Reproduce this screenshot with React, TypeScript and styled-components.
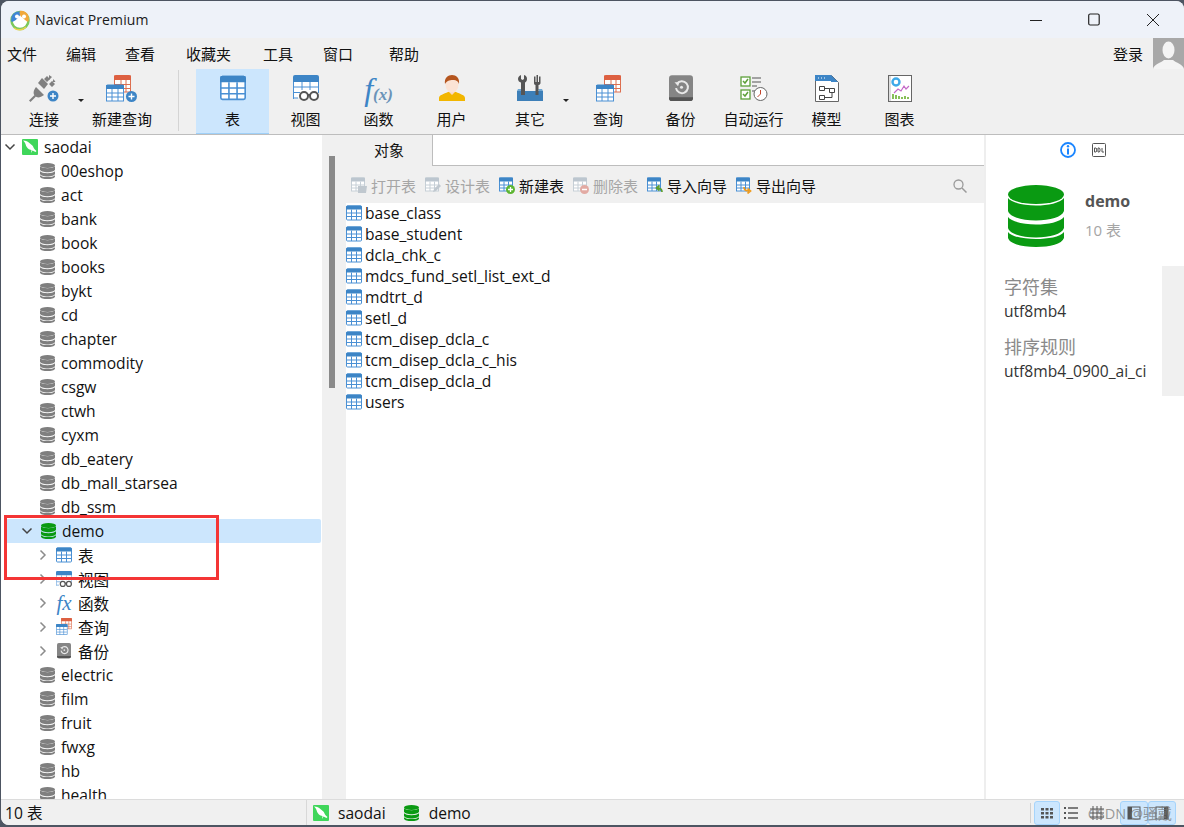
import React from "react";
import styled, { createGlobalStyle } from "styled-components";

const Global = createGlobalStyle`
  html, body { margin: 0; padding: 0; height: 100%; background: #4d5562; overflow: hidden; }
  #root { height: 100%; }
  * { box-sizing: border-box; }
`;

const FONT = `"Open Sans", "Noto Sans", "Noto Sans CJK SC", sans-serif`;

const Screen = styled.div`
  position: relative;
  width: 1184px;
  height: 827px;
  padding: 1px 0 2px 1px;
  font-family: ${FONT};
  color: #111;
`;
const Win = styled.div`
  height: 100%;
  display: flex;
  flex-direction: column;
  border-radius: 8px 8px 0 8px;
  overflow: hidden;
  background: #f0f0f0;
`;
const TitleBar = styled.div`
  height: 37px;
  flex: none;
  display: flex;
  align-items: center;
  padding-left: 8px;
  background: #eef2f9;
`;
const TitleText = styled.span`
  margin-left: 4px;
  font-size: 14px;
  color: #1a1a1a;
  letter-spacing: 0.1px;
`;
const WinButtons = styled.div`
  margin-left: auto;
  padding-right: 2px;
  display: flex;
  align-items: center;
`;
const WinButton = styled.div`
  width: 58.500px;
  height: 37px;
  display: flex;
  align-items: center;
  justify-content: center;
`;
const MenuBar = styled.div`
  height: 30px;
  flex: none;
  display: flex;
  align-items: center;
  padding-left: 6px;
  font-size: 15px;
`;
const MenuItem = styled.div<{ $w: number }>`
  width: ${(p) => p.$w}px;
  white-space: nowrap;
`;
const Login = styled.div`
  margin-left: auto;
  display: flex;
  align-items: center;
  height: 30px;
  gap: 10px;
`;
const Avatar = styled.div`
  width: 31px;
  height: 31px;
  background: #a8a8a8;
  overflow: hidden;
`;
const Toolbar = styled.div`
  height: 67px;
  flex: none;
  display: flex;
  padding: 1px 0 0 7px;
  border-bottom: 1px solid #bdbdbd;
`;
const ToolButton = styled.div<{ $w?: number; $active?: boolean }>`
  position: relative;
  width: ${(p) => p.$w ?? 73}px;
  height: 65px;
  flex: none;
  display: flex;
  flex-direction: column;
  align-items: center;
  background: ${(p) => (p.$active ? "#cce6fd" : "transparent")};
  border-bottom: ${(p) => (p.$active ? "1px solid #9fd0f8" : "none")};
`;
const ToolIcon = styled.div`
  height: 40px;
  padding-top: 6px;
  display: flex;
  align-items: flex-start;
  justify-content: center;
`;
const ToolLabel = styled.div`
  font-size: 15px;
  line-height: 20px;
  white-space: nowrap;
`;
const Caret = styled.div<{ $right: number }>`
  position: absolute;
  right: ${(p) => p.$right}px;
  top: 30px;
  width: 0;
  height: 0;
  border-left: 3px solid transparent;
  border-right: 3px solid transparent;
  border-top: 3px solid #222;
`;
const ToolSep = styled.div`
  width: 1px;
  height: 61px;
  margin: 1px 17px 0 20px;
  background: #d4d4d4;
  flex: none;
`;
const FxBig = styled.div`
  font-family: "Liberation Serif", serif;
  font-style: italic;
  color: #3d85c6;
  font-size: 32px;
  line-height: 28px;
  white-space: nowrap;
`;
const FxParen = styled.span`
  font-size: 17px;
  font-weight: 700;
  color: #6a93b8;
`;
const FxSmall = styled.div`
  font-family: "Liberation Serif", serif;
  font-style: italic;
  color: #3d85c6;
  font-size: 21px;
  line-height: 18px;
  white-space: nowrap;
`;
const Main = styled.div`
  flex: 1;
  min-height: 0;
  display: flex;
  background: #fff;
`;
const Tree = styled.div`
  width: 321px;
  flex: none;
  overflow: hidden;
  background: #fff;
`;
const Row = styled.div<{ $indent: number; $selected?: boolean }>`
  height: 24px;
  display: flex;
  align-items: center;
  padding-left: ${(p) => p.$indent}px;
  margin: ${(p) => (p.$selected ? "0 1px 0 5px" : "0")};
  background: ${(p) => (p.$selected ? "#cce6fd" : "transparent")};
  border-radius: 2px;
  font-size: 15.6px;
  white-space: nowrap;
`;
const Chevron = styled.div`
  width: 16px;
  height: 16px;
  flex: none;
  display: flex;
  align-items: center;
  justify-content: center;
`;
const RowIcon = styled.div<{ $w: number; $mr: number; $ml?: number }>`
  width: ${(p) => p.$w}px;
  margin-left: ${(p) => p.$ml ?? 0}px;
  margin-right: ${(p) => p.$mr}px;
  flex: none;
  display: flex;
  align-items: center;
  justify-content: center;
`;
const Center = styled.div`
  width: 662px;
  flex: none;
  display: flex;
  background: #fff;
`;
const Gutter = styled.div`
  width: 24px;
  flex: none;
  background: #f0f0f0;
  padding: 21px 0 0 7px;
`;
const Thumb = styled.div`
  position: relative;
  z-index: 2;
  width: 6px;
  height: 232px;
  background: #8a8a8a;
`;
const ObjectPane = styled.div`
  flex: 1;
  min-width: 0;
  display: flex;
  flex-direction: column;
`;
const TabStrip = styled.div`
  height: 31px;
  flex: none;
  display: flex;
  margin-left: -24px;
  position: relative;
`;
const Tab = styled.div`
  width: 111px;
  height: 31px;
  flex: none;
  background: #f0f0f0;
  border-right: 1px solid #bdbdbd;
  display: flex;
  align-items: center;
  padding: 0 0 2px 52px;
  font-size: 15px;
`;
const TabRest = styled.div`
  flex: 1;
  border-bottom: 1px solid #bdbdbd;
`;
const ObjBar = styled.div`
  height: 37px;
  flex: none;
  display: flex;
  align-items: center;
  gap: 9px;
  padding: 2px 8px 0 5px;
  background: #f0f0f0;
`;
const ObjButton = styled.div<{ $off?: boolean }>`
  display: flex;
  align-items: center;
  gap: 4px;
  font-size: 15px;
  white-space: nowrap;
  color: ${(p) => (p.$off ? "#a6a6a6" : "#111")};
`;
const SearchSlot = styled.div`
  margin-left: auto;
  display: flex;
  margin-right: 9px;
`;
const ObjList = styled.div`
  flex: 1;
  background: #fff;
`;
const ObjRow = styled.div`
  height: 21px;
  display: flex;
  align-items: center;
  gap: 3px;
  padding-bottom: 2px;
  font-size: 15.6px;
  white-space: nowrap;
`;
const PaneDivider = styled.div`
  width: 2px;
  flex: none;
  background: #eeeeee;
`;
const Info = styled.div`
  flex: 1;
  position: relative;
  background: #fff;
  padding-left: 18px;
`;
const InfoTabs = styled.div`
  height: 30px;
  display: flex;
  align-items: center;
  justify-content: flex-start;
  padding-left: 56px;
  gap: 16px;
`;
const InfoHead = styled.div`
  display: flex;
  margin: 20px 0 0 4px;
  height: 90px;
`;
const InfoHeadText = styled.div`
  margin-left: 21px;
  padding-top: 4px;
`;
const InfoName = styled.div`
  font-size: 16px;
  font-weight: 700;
  color: #555;
  line-height: 24px;
`;
const InfoCount = styled.div`
  font-size: 15px;
  color: #a5a5a5;
  line-height: 20px;
  margin-top: 7px;
`;
const InfoLabel = styled.div`
  font-size: 18px;
  color: #8a8a8a;
  line-height: 24px;
`;
const InfoValue = styled.div`
  font-size: 15.6px;
  color: #333;
  line-height: 20px;
  margin: 2px 0 14px;
  white-space: nowrap;
`;
const InfoScroll = styled.div`
  position: absolute;
  right: 0;
  top: 131px;
  width: 22px;
  height: 130px;
  background: #f0f0f0;
`;
const StatusBar = styled.div`
  height: 26px;
  flex: none;
  display: flex;
  align-items: center;
  border-top: 1px solid #dcdcdc;
  background: #f0f0f0;
  font-size: 15.6px;
`;
const StatusLeft = styled.div`
  width: 306px;
  padding-left: 4px;
  height: 100%;
  display: flex;
  align-items: center;
  border-right: 1px solid #d8d8d8;
  flex: none;
`;
const StatusConn = styled.div`
  display: flex;
  align-items: center;
  gap: 9px;
  padding-left: 6px;
`;
const StatusRight = styled.div`
  margin-left: auto;
  margin-right: 8px;
  display: flex;
  align-items: center;
  height: 100%;
`;
const StatusSep = styled.div`
  width: 1px;
  height: 20px;
  background: #d0d0d0;
  margin-right: 3px;
`;
const StatusBtn = styled.div<{ $on?: boolean; $w: number; $mr?: number }>`
  width: ${(p) => p.$w}px;
  margin-right: ${(p) => p.$mr ?? 0}px;
  height: 24px;
  display: flex;
  align-items: center;
  justify-content: center;
  background: ${(p) => (p.$on ? "#cce6fd" : "transparent")};
  border: 1px solid ${(p) => (p.$on ? "#a6d4fb" : "transparent")};
  border-radius: 3px;
`;
const RedBox = styled.div`
  position: absolute;
  left: 4px;
  top: 515px;
  width: 215px;
  height: 65px;
  border: 3px solid #f43535;
  pointer-events: none;
`;
const Watermark = styled.div`
  position: absolute;
  right: 12px;
  bottom: 4px;
  font-size: 14.500px;
  color: rgba(120, 120, 120, 0.75);
  white-space: nowrap;
  pointer-events: none;
`;

const TableIcon = ({ s = 16, h = "#3d85c6", g = "#4a90d4" }: { s?: number; h?: string; g?: string }) => (
  <svg width={s} height={s} viewBox="0 0 16 16">
    <rect x="0.5" y="1" width="15" height="14" rx="1" fill="#fff" stroke={g} />
    <path d="M0 4.5V2a1.5 1.5 0 0 1 1.5-1.5h13A1.5 1.5 0 0 1 16 2v2.500z" fill={h} />
    <path d="M5.500 4.500V15M10.500 4.500V15M0.500 8h15M0.500 11.500h15" stroke={g} strokeWidth="1" fill="none" />
  </svg>
);
const ViewIcon = ({ s = 26 }: { s?: number }) => (
  <svg width={s} height={s} viewBox="0 0 26 26">
    <path d="M.5 24V4h25v14" fill="#fff" stroke="#4a90d4" />
    <path d="M0 7V2a2 2 0 0 1 2-2h22a2 2 0 0 1 2 2v5z" fill="#3d85c6" />
    <path d="M9 7v8M17 7v8M1 12h24M1 17.500h6M1 23h4" stroke="#4a90d4" fill="none" />
    <circle cx="11" cy="21" r="4" fill="#fff" stroke="#555" strokeWidth="2" />
    <circle cx="21" cy="21" r="4" fill="#fff" stroke="#555" strokeWidth="2" />
    <path d="M15 20h2" stroke="#555" strokeWidth="2" />
  </svg>
);
const UserIcon = () => (
  <svg width="26" height="27" viewBox="0 0 26 27">
    <path d="M0 26v-3c0-3 5-4 9-6h8c4 2 9 3 9 6v3z" fill="#f2b600" />
    <path d="M9 16l4 4 4-4v-4H9z" fill="#f9d9c6" />
    <ellipse cx="13" cy="9.500" rx="6.500" ry="8" fill="#fbe3d5" />
    <path d="M6 9C5 3 9 0 13 0s8 3 7 9c-1-3-3-4-5-4-3 0-7 0-9 4z" fill="#b5561f" />
  </svg>
);
const PlugIcon = () => (
  <svg width="32" height="28" viewBox="0 0 32 28">
    <g fill="#808080">
      <path d="M8 12l8 8c-4 3-7 3-9 1s-2-5 1-9z" />
      <path d="M6.500 20L1 25.500 2.500 27l5.500-5.500z" />
      <path d="M14 3l6 6-4 5-6-6z" />
      <path d="M19 1l3 3-3 3-3-3zM24 6l3 3-3 3-3-3z" />
      <path d="M21 0l3 2-3 3zM25.500 4l2 3-3 0z" />
    </g>
    <circle cx="25" cy="21" r="5.500" fill="#3d85c6" />
    <path d="M22 21h6M25 18v6" stroke="#fff" strokeWidth="1.400" />
  </svg>
);
const QueryIcon = ({ plus, w = 25 }: { plus?: boolean; w?: number }) => (
  <svg width={plus ? 32 : w} height={plus ? 27 : (w * 27) / 25} viewBox={plus ? "0 0 32 27" : "0 0 25 27"}>
    <rect x="8.500" y="1" width="16" height="16" fill="#fff" stroke="#dd6f50" />
    <path d="M8 5V2a2 2 0 0 1 2-2h13a2 2 0 0 1 2 2v3z" fill="#dd6041" />
    <path d="M15 5v12M20 5v12M9 9.500h15M9 13.500h15" stroke="#dd6f50" fill="none" />
    <rect x="0.500" y="10.500" width="17" height="15.500" fill="#fff" stroke="#4a90d4" />
    <path d="M0 14v-3a1.500 1.500 0 0 1 1.500-1.500h15A1.500 1.500 0 0 1 18 11v3z" fill="#3d85c6" />
    <path d="M6 14v12M12 14v12M1 18h16M1 22h16" stroke="#4a90d4" fill="none" />
    {plus && <circle cx="25.500" cy="21.500" r="5.500" fill="#3d85c6" />}
    {plus && <path d="M22.500 21.500h6M25.500 18.500v6" stroke="#fff" strokeWidth="1.400" />}
  </svg>
);
const OtherIcon = () => (
  <svg width="28" height="26" viewBox="0 0 28 26">
    <path d="M1 16h26v10H1z" fill="#3d7fb8" />
    <path d="M2 14h4l-1 2H1zM22 14h4l1 2h-4z" fill="#6fa7d3" />
    <g fill="#555">
      <path d="M5 0v4l1.500 1L8 4V0c2 .5 3 2 3 4s-1 3-2 3.500V20H5V7.500C3 7 2 5.500 2 4s1-3.500 3-4z" />
      <path d="M18 1.500h1.500V7h1V0H22v7h1V1.500h1.500V8c0 1-1 2-2 2v10H19.500V10c-1 0-1.500-1-1.500-2z" />
    </g>
  </svg>
);
const BackupIcon = ({ s = 24 }: { s?: number }) => (
  <svg width={s} height={s * 1.1} viewBox="0 0 24 26">
    <rect x="0" y="0" width="24" height="26" rx="3" fill="#858585" />
    <path d="M0 22h24v1a3 3 0 0 1-3 3H3a3 3 0 0 1-3-3z" fill="#555" />
    <path d="M8 8.500a6 6 0 1 1-1 4.500" fill="none" stroke="#e8e8e8" strokeWidth="2" />
    <path d="M5.500 7l5 0-1.500 4z" fill="#e8e8e8" />
    <circle cx="12.500" cy="12" r="1.500" fill="#e8e8e8" />
  </svg>
);
const AutoRunIcon = () => (
  <svg width="28" height="27" viewBox="0 0 28 27">
    <rect x="1" y="2" width="9" height="9" fill="#fff" stroke="#5da03a" strokeWidth="1.300" />
    <rect x="1" y="15" width="9" height="9" fill="#fff" stroke="#5da03a" strokeWidth="1.300" />
    <path d="M3 6l2 2 3-4M3 19l2 2 3-4" fill="none" stroke="#5da03a" strokeWidth="1.500" />
    <path d="M12 3h9M12 7h9M12 11h5M12 16h3" stroke="#888" strokeWidth="1.600" />
    <circle cx="20.500" cy="19" r="6.500" fill="#fff" stroke="#666" />
    <path d="M20.500 19v-4M20.500 19l-3 3" stroke="#c2452d" />
  </svg>
);
const ModelIcon = () => (
  <svg width="24" height="27" viewBox="0 0 24 27">
    <path d="M.5.500h16l7 7v19H.5z" fill="#fff" stroke="#666" />
    <path d="M0 0h16v6H0zM16 0l7 7h-7z" fill="#3d85c6" />
    <path d="M3 3h1M6 3h1M9 3h1" stroke="#fff" />
    <path d="M4.500 11.500h5v4h-5zM14.500 13.500h5v4h-5zM4.500 20.500h5v4h-5z" fill="none" stroke="#444" />
    <path d="M9.500 13.500h5M17 17.500v5h-7.500" fill="none" stroke="#444" />
  </svg>
);
const ChartIcon = () => (
  <svg width="24" height="27" viewBox="0 0 24 27">
    <rect x=".5" y=".5" width="23" height="26" fill="#fff" stroke="#666" />
    <path d="M2 1v25" stroke="#bbb" />
    <circle cx="8" cy="7" r="3.500" fill="none" stroke="#3ea9e8" strokeWidth="2.400" />
    <path d="M6 18l4-4 3 2 3-5 2 3 3-3" fill="none" stroke="#c46ac8" strokeWidth="1.200" />
    <path d="M5 19v5M8 20v4M11 21v3M14 22v2M17 21v3M20 22v2" stroke="#72b53a" strokeWidth="1.700" />
  </svg>
);
const DbIcon = ({ c = "#7f7f7f", w = 15, h = 16 }: { c?: string; w?: number; h?: number }) => (
  <svg width={w} height={h} viewBox="0 0 56 62" preserveAspectRatio="none">
    <ellipse cx="28" cy="9.500" rx="28" ry="9.500" fill={c} />
    <path d="M0 13c4 5 16 7.500 28 7.500S52 18 56 13v13c-2 6-14 9.500-28 9.500S2 32 0 26z" fill={c} />
    <path d="M0 32c4 5 16 7.500 28 7.500S52 37 56 32v11c-2 6-14 9.500-28 9.500S2 49 0 43z" fill={c} />
    <path d="M0 47c4 5 16 7 28 7s24-2 28-7v6c-2 6-14 9-28 9S2 59 0 53z" fill={c} />
  </svg>
);
const MysqlIcon = () => (
  <svg width="16" height="16" viewBox="0 0 16 16">
    <rect width="16" height="16" rx="1" fill="#3fd65a" />
    <path d="M1 1.500c3 0 5 1 7 3 1.500 1.500 3 2 3.500 4 .5 1.500 2 2.500 3 3.500l-1 1c-1-.5-2-1-3-1.500L9 14c0-1 .5-2 .5-3C7 11 4 8 3.500 5 3 3.500 2 2.500 1 1.500z" fill="#fff" />
  </svg>
);
const Logo = () => (
  <svg width="22" height="22" viewBox="0 0 22 22">
    <circle cx="11" cy="11.500" r="8.500" fill="#fff" stroke="#7cc95b" strokeWidth="2.500" />
    <path d="M2.500 13C1 7 5 1.500 11 2.500c2 1 1 3-1 5-2 2.500-4 5-7.500 5.500z" fill="#3f86d6" />
    <path d="M11 2c5-1 9 3 9 8 0 2-1 3-2 2.500-3-2-4-4-6-5-1-1-2-3-1-5.500z" fill="#f1a83a" />
    <circle cx="8" cy="7.500" r="2" fill="#fff" />
    <circle cx="15" cy="7.500" r="2" fill="#fff" />
    <path d="M5 19c4 3 9 2 12-1" fill="none" stroke="#e9d34c" strokeWidth="1.500" />
  </svg>
);
const ChevDown = ({ c = "#444" }: { c?: string }) => (
  <svg width="12" height="12" viewBox="0 0 12 12">
    <path d="M1.500 3.500L6 8l4.500-4.500" fill="none" stroke={c} strokeWidth="1.500" />
  </svg>
);
const ChevRight = () => (
  <svg width="12" height="12" viewBox="0 0 12 12">
    <path d="M3.500 1.500L8 6l-4.500 4.500" fill="none" stroke="#8c8c8c" strokeWidth="1.500" />
  </svg>
);
const ObjIcon = ({ kind, off }: { kind: string; off?: boolean }) => {
  const h = off ? "#bcc6cf" : "#3d85c6";
  const g = off ? "#c6cfd6" : "#4a90d4";
  return (
    <svg width="16" height="17" viewBox="0 0 16 17">
      <rect x=".5" y="1" width="13" height="13" fill="#fff" stroke={g} />
      <path d="M0 4.500V2a1.500 1.500 0 0 1 1.500-1.500h11A1.500 1.500 0 0 1 14 2v2.500z" fill={h} />
      <path d="M5 4.500V14M9.500 4.500V14M1 8h12M1 11h12" stroke={g} fill="none" />
      {kind === "open" && <path d="M7 9h9l-1 7H7z" fill="#c0c8cf" />}
      {kind === "design" && <path d="M8 15l1-3 5-5 2 2-5 5z" fill="#c0c8cf" />}
      {kind === "new" && <><circle cx="11.500" cy="12.500" r="4.500" fill="#5cb531" /><path d="M9 12.500h5M11.500 10v5" stroke="#fff" strokeWidth="1.300" /></>}
      {kind === "del" && <><circle cx="11.500" cy="12.500" r="4.500" fill="#e2aaa3" /><path d="M9 12.500h5" stroke="#fff" strokeWidth="1.300" /></>}
      {kind === "imp" && <path d="M15 15c0-3-1.500-4-4.500-4M12.500 8.500l-3 2.500 3 2.500" fill="none" stroke="#5c9e2e" strokeWidth="1.700" />}
      {kind === "exp" && <path d="M8 10c0 3 1.500 4 5 4M11.500 11.500l3 2.500-3 2.500" fill="none" stroke="#ef9b1d" strokeWidth="1.700" />}
    </svg>
  );
};

const dbsTop = ["00eshop", "act", "bank", "book", "books", "bykt", "cd", "chapter", "commodity", "csgw", "ctwh", "cyxm", "db_eatery", "db_mall_starsea", "db_ssm"];
const dbsBottom = ["electric", "film", "fruit", "fwxg", "hb", "health"];
const tables = ["base_class", "base_student", "dcla_chk_c", "mdcs_fund_setl_list_ext_d", "mdtrt_d", "setl_d", "tcm_disep_dcla_c", "tcm_disep_dcla_c_his", "tcm_disep_dcla_d", "users"];
const menus: [string, number][] = [["文件", 59], ["编辑", 59], ["查看", 61], ["收藏夹", 77], ["工具", 60], ["窗口", 66], ["帮助", 30]];

const DbRow = ({ name }: { name: string }) => (
  <Row $indent={38}>
    <RowIcon $w={16} $mr={6}><DbIcon /></RowIcon>
    {name}
  </Row>
);

const ChildRow = ({ icon, label }: { icon: React.ReactNode; label: string }) => (
  <Row $indent={34}>
    <Chevron><ChevRight /></Chevron>
    <RowIcon $w={18} $ml={4} $mr={5}>{icon}</RowIcon>
    {label}
  </Row>
);

const Tool = ({ icon, label, w, active, caret }: { icon: React.ReactNode; label: string; w?: number; active?: boolean; caret?: number }) => (
  <ToolButton $w={w} $active={active}>
    <ToolIcon>{icon}</ToolIcon>
    <ToolLabel>{label}</ToolLabel>
    {caret !== undefined && <Caret $right={caret} />}
  </ToolButton>
);

export default function App() {
  return (
    <Screen>
      <Global />
      <Win>
        <TitleBar>
          <Logo />
          <TitleText>Navicat Premium</TitleText>
          <WinButtons>
            <WinButton>
              <svg width="12" height="12" viewBox="0 0 12 12"><path d="M0 6.500h12" stroke="#222" /></svg>
            </WinButton>
            <WinButton>
              <svg width="12" height="14" viewBox="0 0 12 14"><rect x=".7" y="1" width="10.500" height="11" rx="1.500" fill="none" stroke="#222" strokeWidth="1.200" /></svg>
            </WinButton>
            <WinButton>
              <svg width="12" height="12" viewBox="0 0 12 12"><path d="M0 0l12 12M12 0L0 12" stroke="#222" /></svg>
            </WinButton>
          </WinButtons>
        </TitleBar>
        <MenuBar>
          {menus.map(([m, w]) => <MenuItem key={m} $w={w}>{m}</MenuItem>)}
          <Login>
            登录
            <Avatar>
              <svg width="31" height="31" viewBox="0 0 31 31">
                <ellipse cx="15.500" cy="12" rx="6" ry="8.500" fill="#f4f4f4" />
                <path d="M0 31c1-5 8-6 11-9h9c3 3 10 4 11 9z" fill="#f4f4f4" />
              </svg>
            </Avatar>
          </Login>
        </MenuBar>
        <Toolbar>
          <Tool icon={<PlugIcon />} label="连接" w={72} />
          <ToolButton $w={6}><Caret $right={2} /></ToolButton>
          <Tool icon={<QueryIcon plus />} label="新建查询" w={72} />
          <ToolSep />
          <Tool icon={<TableIcon s={26} />} label="表" active />
          <Tool icon={<ViewIcon />} label="视图" />
          <Tool icon={<FxBig>f<FxParen>(x)</FxParen></FxBig>} label="函数" />
          <Tool icon={<UserIcon />} label="用户" />
          <Tool icon={<OtherIcon />} label="其它" w={84} caret={3} />
          <Tool icon={<QueryIcon />} label="查询" w={72} />
          <Tool icon={<BackupIcon />} label="备份" />
          <Tool icon={<AutoRunIcon />} label="自动运行" />
          <Tool icon={<ModelIcon />} label="模型" />
          <Tool icon={<ChartIcon />} label="图表" />
        </Toolbar>
        <Main>
          <Tree>
            <Row $indent={1}>
              <Chevron><ChevDown /></Chevron>
              <RowIcon $w={16} $ml={4} $mr={6}><MysqlIcon /></RowIcon>
              saodai
            </Row>
            {dbsTop.map((d) => <DbRow key={d} name={d} />)}
            <Row $indent={13} $selected>
              <Chevron><ChevDown /></Chevron>
              <RowIcon $w={16} $ml={5} $mr={6}><DbIcon c="#0a9a12" /></RowIcon>
              demo
            </Row>
            <ChildRow icon={<TableIcon />} label="表" />
            <ChildRow icon={<ViewIcon s={16} />} label="视图" />
            <ChildRow icon={<FxSmall>fx</FxSmall>} label="函数" />
            <ChildRow icon={<QueryIcon w={16} />} label="查询" />
            <ChildRow icon={<BackupIcon s={14} />} label="备份" />
            {dbsBottom.map((d) => <DbRow key={d} name={d} />)}
          </Tree>
          <Center>
            <Gutter><Thumb /></Gutter>
            <ObjectPane>
              <TabStrip>
                <Tab>对象</Tab>
                <TabRest />
              </TabStrip>
              <ObjBar>
                <ObjButton $off><ObjIcon kind="open" off />打开表</ObjButton>
                <ObjButton $off><ObjIcon kind="design" off />设计表</ObjButton>
                <ObjButton><ObjIcon kind="new" />新建表</ObjButton>
                <ObjButton $off><ObjIcon kind="del" off />删除表</ObjButton>
                <ObjButton><ObjIcon kind="imp" />导入向导</ObjButton>
                <ObjButton><ObjIcon kind="exp" />导出向导</ObjButton>
                <SearchSlot>
                  <svg width="14" height="14" viewBox="0 0 14 14">
                    <circle cx="5.500" cy="5.500" r="4.500" fill="none" stroke="#9a9a9a" strokeWidth="1.300" />
                    <path d="M9 9l4.500 4.500" stroke="#9a9a9a" strokeWidth="1.500" />
                  </svg>
                </SearchSlot>
              </ObjBar>
              <ObjList>
                {tables.map((t) => (
                  <ObjRow key={t}><TableIcon />{t}</ObjRow>
                ))}
              </ObjList>
            </ObjectPane>
          </Center>
          <PaneDivider />
          <Info>
            <InfoTabs>
              <svg width="16" height="16" viewBox="0 0 16 16">
                <circle cx="8" cy="8" r="7" fill="none" stroke="#1a85ff" strokeWidth="1.800" />
                <path d="M8 6.500V12.500" stroke="#1a85ff" strokeWidth="2" />
                <circle cx="8" cy="4.200" r="1.200" fill="#1a85ff" />
              </svg>
              <svg width="14" height="14" viewBox="0 0 14 14">
                <rect x=".5" y=".5" width="13" height="13" rx="1" fill="#fff" stroke="#555" />
                <path d="M2.500 5v4h1.500l.7-1V6l-.7-1zM6 5v4h1.300L8 8V6l-.7-1zM10 5v4h2" fill="none" stroke="#555" />
              </svg>
            </InfoTabs>
            <InfoHead>
              <DbIcon c="#0a9a12" w={56} h={62} />
              <InfoHeadText>
                <InfoName>demo</InfoName>
                <InfoCount>10 表</InfoCount>
              </InfoHeadText>
            </InfoHead>
            <InfoLabel>字符集</InfoLabel>
            <InfoValue>utf8mb4</InfoValue>
            <InfoLabel>排序规则</InfoLabel>
            <InfoValue>utf8mb4_0900_ai_ci</InfoValue>
            <InfoScroll />
          </Info>
        </Main>
        <StatusBar>
          <StatusLeft>10 表</StatusLeft>
          <StatusConn>
            <MysqlIcon />saodai
            <RowIcon $w={16} $ml={9} $mr={0}><DbIcon c="#0a9a12" /></RowIcon>
            demo
          </StatusConn>
          <StatusRight>
            <StatusSep />
            <StatusBtn $on $w={26}>
              <svg width="14" height="14" viewBox="0 0 14 14"><path d="M1 2h3v2.500H1zM5.500 2h3v2.500h-3zM10 2h3v2.500h-3zM1 6h3v2.500H1zM5.500 6h3v2.500h-3zM10 6h3v2.500h-3zM1 10h3v2.500H1zM5.500 10h3v2.500h-3zM10 10h3v2.500h-3z" fill="#555" /></svg>
            </StatusBtn>
            <StatusBtn $w={22}>
              <svg width="16" height="14" viewBox="0 0 16 14"><path d="M1 1h2v2H1zM1 6h2v2H1zM1 11h2v2H1z" fill="#555" /><path d="M5 2h10M5 7h10M5 12h10" stroke="#555" strokeWidth="1.300" /></svg>
            </StatusBtn>
            <StatusBtn $w={30} $mr={8}>
              <svg width="16" height="16" viewBox="0 0 16 16"><path d="M4 1v14M8 1v14M12 1v14M1 4h14M1 8h14M1 12h14" stroke="#555" /></svg>
            </StatusBtn>
            <StatusBtn $on $w={28}>
              <svg width="14" height="14" viewBox="0 0 14 14"><rect x="1" y="1" width="12" height="12" fill="none" stroke="#555" /><path d="M1 1h4v12H1z" fill="#555" /></svg>
            </StatusBtn>
            <StatusBtn $on $w={28}>
              <svg width="14" height="14" viewBox="0 0 14 14"><rect x="1" y="1" width="12" height="12" fill="none" stroke="#555" /><path d="M9 1h4v12H9z" fill="#555" /></svg>
            </StatusBtn>
          </StatusRight>
        </StatusBar>
      </Win>
      <RedBox />
      <Watermark>CSDN @骚戴</Watermark>
    </Screen>
  );
}
